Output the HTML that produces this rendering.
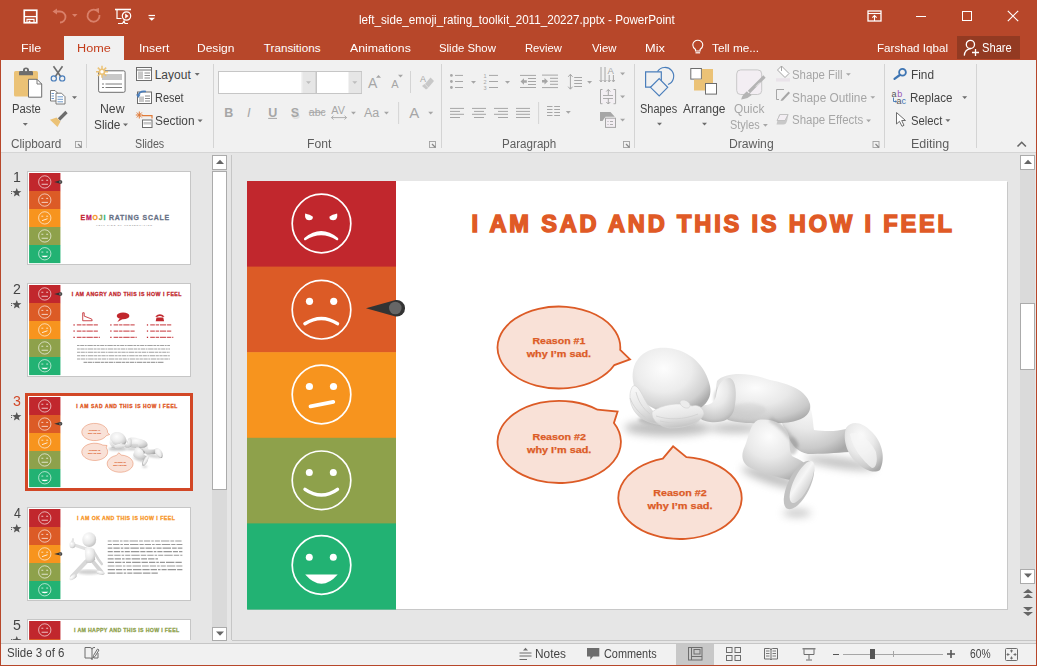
<!DOCTYPE html><html><head><meta charset="utf-8"><style>
html,body{margin:0;padding:0;width:1037px;height:666px;overflow:hidden;background:#E6E6E6}
.a{position:absolute}
.t{position:absolute;font-family:"Liberation Sans",sans-serif;white-space:nowrap;line-height:1}
svg{overflow:visible}
</style></head><body>
<div class="a" style="left:0px;top:0px;width:1037px;height:60px;background:#B7472A;"></div>
<div class="a" style="left:64px;top:36px;width:60px;height:24px;background:#F1F1F1;"></div>
<div class="a" style="left:957px;top:36px;width:63px;height:23px;background:#933A22;"></div>
<svg class="a" style="left:22.5px;top:8.5px;" width="15" height="15" viewBox="0 0 15 15"><rect x="1.25" y="1.25" width="12.5" height="12.5" fill="none" stroke="#fff" stroke-width="1.7"/><path d="M1.3,7.6 H13.7" stroke="#fff" stroke-width="1.3"/><path d="M4,13.8 V10.3 H11 V13.8" fill="none" stroke="#fff" stroke-width="1.2"/><rect x="5.6" y="11.6" width="1.8" height="2.2" fill="#fff"/></svg>
<svg class="a" style="left:51px;top:8px;overflow:visible" width="16" height="15" viewBox="0 0 16 15"><path d="M3.5,6.5 H9 A5.5,5.5 0 0 1 9,17.5" fill="none" stroke="#D9806A" stroke-width="1.8" transform="translate(0,-3)"/><path d="M1.5,3.5 L6,0.5 L6,6.5Z" fill="#D9806A"/></svg>
<svg class="a" style="left:71.5px;top:13.5px;" width="6" height="4" viewBox="0 0 6 4"><path d="M0,0 H5.5 L2.75,3Z" fill="#D9806A"/></svg>
<svg class="a" style="left:86px;top:8px;" width="16" height="15" viewBox="0 0 16 15"><path d="M10.5,2.5 A6,6 0 1 0 13.5,7" fill="none" stroke="#D9806A" stroke-width="1.8"/><path d="M8,1.5 L13,0 L13,5.5Z" fill="#D9806A"/></svg>
<svg class="a" style="left:114px;top:8px;" width="18" height="17" viewBox="0 0 18 17"><path d="M1,1.5 H17" stroke="#fff" stroke-width="1.6"/><path d="M3,2 V10.5 H7.5" fill="none" stroke="#fff" stroke-width="1.2"/><circle cx="12.5" cy="8" r="4.2" fill="none" stroke="#fff" stroke-width="1.2"/><path d="M11.2,5.6 L14.6,8 L11.2,10.4Z" fill="#fff"/><path d="M4,15.5 H8.5 L10,13 L11,15.5 H14" fill="none" stroke="#fff" stroke-width="1.2"/></svg>
<svg class="a" style="left:148px;top:14px;" width="8" height="8" viewBox="0 0 8 8"><path d="M0.5,1.5 H7" stroke="#fff" stroke-width="1.2"/><path d="M0.5,3.8 H7 L3.75,6.8Z" fill="#fff"/></svg>
<svg class="a" style="left:867px;top:10px;" width="15" height="12" viewBox="0 0 15 12"><rect x="1" y="1" width="13" height="10" fill="none" stroke="#fff" stroke-width="1.3"/><path d="M1,3.5 H14" stroke="#fff" stroke-width="1.1"/><path d="M7.5,11 V5.5 M5.3,7.7 L7.5,5.5 L9.7,7.7" fill="none" stroke="#fff" stroke-width="1.1"/></svg>
<div class="a" style="left:916px;top:16px;width:10px;height:1px;background:#fff;"></div>
<div class="a" style="left:962px;top:11px;width:8px;height:8px;border:1.2px solid #fff"></div>
<svg class="a" style="left:1007px;top:10px;" width="12" height="12" viewBox="0 0 12 12"><path d="M0.8,0.8 L11.2,11.2 M11.2,0.8 L0.8,11.2" stroke="#fff" stroke-width="1.2"/></svg>
<svg class="a" style="left:692px;top:40px;" width="12" height="15" viewBox="0 0 12 15"><path d="M3.5,9.5 C1.5,8 0.8,6.4 0.8,4.9 A5,4.6 0 0 1 10.8,4.9 C10.8,6.4 10,8 8.1,9.5 V11 H3.5Z" fill="none" stroke="#fff" stroke-width="1.1"/><path d="M3.5,12.8 H8.1" stroke="#fff" stroke-width="1.2"/></svg>
<svg class="a" style="left:962px;top:39px;" width="18" height="18" viewBox="0 0 18 18"><circle cx="8.4" cy="5.4" r="4.1" fill="none" stroke="#fff" stroke-width="1.3"/><path d="M2.3,16.6 C2.6,12.5 5.2,10 8.6,9.6" fill="none" stroke="#fff" stroke-width="1.3"/><path d="M13.5,10 V17 M10,13.5 H17" stroke="#fff" stroke-width="1.3"/></svg>
<div class="a" style="left:0px;top:60px;width:1037px;height:92px;background:#F1F1F1;"></div>
<div class="a" style="left:0px;top:152px;width:1037px;height:1px;background:#D5D5D5;"></div>
<div class="a" style="left:86px;top:64px;width:1px;height:84px;background:#D4D4D4;"></div>
<div class="a" style="left:213px;top:64px;width:1px;height:84px;background:#D4D4D4;"></div>
<div class="a" style="left:441px;top:64px;width:1px;height:84px;background:#D4D4D4;"></div>
<div class="a" style="left:634px;top:64px;width:1px;height:84px;background:#D4D4D4;"></div>
<div class="a" style="left:884px;top:64px;width:1px;height:84px;background:#D4D4D4;"></div>
<div class="a" style="left:976px;top:64px;width:1px;height:84px;background:#D4D4D4;"></div>
<div class="t" style="left:359.33px;top:13.64px;font-size:12px;color:#fff;font-weight:normal;transform:scaleX(0.9704);transform-origin:0 0;">left_side_emoji_rating_toolkit_2011_20227.pptx - PowerPoint</div>
<div class="t" style="left:21.03px;top:42.20px;font-size:11.7px;color:#fff;font-weight:normal;transform:scaleX(1.0706);transform-origin:0 0;">File</div>
<div class="t" style="left:138.76px;top:42.20px;font-size:11.7px;color:#fff;font-weight:normal;transform:scaleX(1.0357);transform-origin:0 0;">Insert</div>
<div class="t" style="left:196.77px;top:42.20px;font-size:11.7px;color:#fff;font-weight:normal;transform:scaleX(1.0286);transform-origin:0 0;">Design</div>
<div class="t" style="left:263.80px;top:42.20px;font-size:11.7px;color:#fff;font-weight:normal;transform:scaleX(1.0000);transform-origin:0 0;">Transitions</div>
<div class="t" style="left:349.80px;top:42.20px;font-size:11.7px;color:#fff;font-weight:normal;transform:scaleX(1.0517);transform-origin:0 0;">Animations</div>
<div class="t" style="left:439.13px;top:42.20px;font-size:11.7px;color:#fff;font-weight:normal;transform:scaleX(0.9724);transform-origin:0 0;">Slide Show</div>
<div class="t" style="left:525.34px;top:42.20px;font-size:11.7px;color:#fff;font-weight:normal;transform:scaleX(0.9605);transform-origin:0 0;">Review</div>
<div class="t" style="left:592.30px;top:42.20px;font-size:11.7px;color:#fff;font-weight:normal;transform:scaleX(0.9720);transform-origin:0 0;">View</div>
<div class="t" style="left:645.11px;top:42.20px;font-size:11.7px;color:#fff;font-weight:normal;transform:scaleX(1.0941);transform-origin:0 0;">Mix</div>
<div class="t" style="left:712.40px;top:42.20px;font-size:11.7px;color:#fff;font-weight:normal;transform:scaleX(1.0065);transform-origin:0 0;">Tell me...</div>
<div class="t" style="left:76.92px;top:42.20px;font-size:11.7px;color:#C43E1C;font-weight:normal;transform:scaleX(1.0833);transform-origin:0 0;">Home</div>
<div class="t" style="left:876.51px;top:42.20px;font-size:11.7px;color:#fff;font-weight:normal;transform:scaleX(0.9929);transform-origin:0 0;">Farshad Iqbal</div>
<div class="t" style="left:982.27px;top:42.04px;font-size:12px;color:#fff;font-weight:normal;transform:scaleX(0.9290);transform-origin:0 0;">Share</div>
<div class="t" style="left:10.60px;top:137.64px;font-size:12px;color:#5E5E5E;font-weight:normal;transform:scaleX(0.9804);transform-origin:0 0;">Clipboard</div>
<div class="t" style="left:134.91px;top:137.64px;font-size:12px;color:#5E5E5E;font-weight:normal;transform:scaleX(0.8938);transform-origin:0 0;">Slides</div>
<div class="t" style="left:306.59px;top:137.64px;font-size:12px;color:#5E5E5E;font-weight:normal;transform:scaleX(1.0130);transform-origin:0 0;">Font</div>
<div class="t" style="left:502.33px;top:137.64px;font-size:12px;color:#5E5E5E;font-weight:normal;transform:scaleX(0.9685);transform-origin:0 0;">Paragraph</div>
<div class="t" style="left:728.79px;top:137.64px;font-size:12px;color:#5E5E5E;font-weight:normal;transform:scaleX(1.0143);transform-origin:0 0;">Drawing</div>
<div class="t" style="left:911.46px;top:137.64px;font-size:12px;color:#5E5E5E;font-weight:normal;transform:scaleX(1.0429);transform-origin:0 0;">Editing</div>
<div class="t" style="left:11.76px;top:103.14px;font-size:12px;color:#444;font-weight:normal;transform:scaleX(0.9414);transform-origin:0 0;">Paste</div>
<div class="t" style="left:99.58px;top:103.14px;font-size:12px;color:#444;font-weight:normal;transform:scaleX(1.0217);transform-origin:0 0;">New</div>
<div class="t" style="left:94.21px;top:118.84px;font-size:12px;color:#444;font-weight:normal;transform:scaleX(0.9920);transform-origin:0 0;">Slide</div>
<div class="t" style="left:154.70px;top:68.64px;font-size:12px;color:#444;font-weight:normal;transform:scaleX(1.0000);transform-origin:0 0;">Layout</div>
<div class="t" style="left:154.79px;top:91.74px;font-size:12px;color:#444;font-weight:normal;transform:scaleX(0.9133);transform-origin:0 0;">Reset</div>
<div class="t" style="left:154.71px;top:115.24px;font-size:12px;color:#444;font-weight:normal;transform:scaleX(0.9868);transform-origin:0 0;">Section</div>
<div class="t" style="left:640.19px;top:103.04px;font-size:12px;color:#444;font-weight:normal;transform:scaleX(0.9125);transform-origin:0 0;">Shapes</div>
<div class="t" style="left:683.30px;top:103.04px;font-size:12px;color:#444;font-weight:normal;transform:scaleX(0.9952);transform-origin:0 0;">Arrange</div>
<div class="t" style="left:734.30px;top:103.04px;font-size:12px;color:#A6A6A6;font-weight:normal;transform:scaleX(0.9903);transform-origin:0 0;">Quick</div>
<div class="t" style="left:729.59px;top:118.64px;font-size:12px;color:#A6A6A6;font-weight:normal;transform:scaleX(0.9062);transform-origin:0 0;">Styles</div>
<div class="t" style="left:792.05px;top:68.64px;font-size:12px;color:#A6A6A6;font-weight:normal;transform:scaleX(0.9481);transform-origin:0 0;">Shape Fill</div>
<div class="t" style="left:792.01px;top:91.64px;font-size:12px;color:#A6A6A6;font-weight:normal;transform:scaleX(0.9867);transform-origin:0 0;">Shape Outline</div>
<div class="t" style="left:792.04px;top:114.24px;font-size:12px;color:#A6A6A6;font-weight:normal;transform:scaleX(0.9562);transform-origin:0 0;">Shape Effects</div>
<div class="t" style="left:910.61px;top:68.64px;font-size:12px;color:#444;font-weight:normal;transform:scaleX(0.9864);transform-origin:0 0;">Find</div>
<div class="t" style="left:910.44px;top:91.84px;font-size:12px;color:#444;font-weight:normal;transform:scaleX(0.9628);transform-origin:0 0;">Replace</div>
<div class="t" style="left:910.66px;top:114.74px;font-size:12px;color:#444;font-weight:normal;transform:scaleX(0.9406);transform-origin:0 0;">Select</div>
<svg class="a" style="left:0;top:60px" width="1037" height="92" viewBox="0 60 1037 92"><rect x="14" y="71" width="24" height="25.5" rx="1.5" fill="#EBC276"/><path d="M19,75.3 V72.3 Q19,71 20.5,71 H23 V70 A3,2.6 0 0 1 29,70 V71 H31.5 Q33,71 33,72.3 V75.3Z" fill="#6D6D6D"/><circle cx="26" cy="70.2" r="1.1" fill="#F1F1F1"/><path d="M28.5,79.3 H37 L41.7,84 V97.2 H28.5Z" fill="#fff" stroke="#6D6D6D" stroke-width="1"/><path d="M37,79.3 V84 H41.7" fill="none" stroke="#6D6D6D" stroke-width="0.9"/><path d="M22.8,123 h5 l-2.5,2.75z" fill="#6D6D6D"/><path d="M53.5,66.3 L61,77 M62.5,66.3 L55,77" stroke="#6D6D6D" stroke-width="1.6"/><circle cx="53.8" cy="78.4" r="2.6" fill="none" stroke="#4A7EBB" stroke-width="1.2"/><circle cx="62.2" cy="78.4" r="2.6" fill="none" stroke="#4A7EBB" stroke-width="1.2"/><path d="M50.5,90.5 H55 L57.5,93 V101 H50.5Z" fill="#fff" stroke="#6D6D6D" stroke-width="0.9"/><path d="M51.5,93.5 H54 M51.5,96 H54 M51.5,98.5 H54" stroke="#4A7EBB" stroke-width="0.8"/><path d="M56,93.2 H61.5 L65,96.7 V104 H56Z" fill="#fff" stroke="#6D6D6D" stroke-width="0.9"/><path d="M57.5,96.8 H63 M57.5,99.3 H63 M57.5,101.8 H63" stroke="#4A7EBB" stroke-width="0.8"/><path d="M72,96.2 h5 l-2.5,2.75z" fill="#6D6D6D"/><path d="M59,119.5 L64.5,114 M62.5,116 L66.5,112" stroke="#6D6D6D" stroke-width="3.2"/><path d="M50,119.7 L56.5,117.5 L60.5,121.5 L57.5,127 Z" fill="#EBC276"/><rect x="98.6" y="70.8" width="26.5" height="21.5" rx="1.5" fill="#fff" stroke="#6D6D6D" stroke-width="1"/><rect x="102" y="74" width="20" height="6" fill="#C8C8C8"/><path d="M102,84 H104 M105.5,84 H122 M102,87.5 H104 M105.5,87.5 H122" stroke="#6D6D6D" stroke-width="0.9"/><g stroke="#EBC276" stroke-width="1.5"><path d="M102,65.8 V77.8 M96,71.8 H108 M97.8,67.6 L106.2,76 M106.2,67.6 L97.8,76"/></g><circle cx="102" cy="71.8" r="3.2" fill="#EBC276"/><circle cx="102" cy="71.8" r="1.7" fill="#fff"/><path d="M123,123.5 h5 l-2.5,2.75z" fill="#6D6D6D"/><rect x="136.5" y="67.5" width="15" height="13" fill="#fff" stroke="#6D6D6D" stroke-width="1"/><path d="M137,70 H151" stroke="#6D6D6D" stroke-width="1"/><rect x="138" y="71.5" width="5" height="7.5" fill="#C8C8C8"/><path d="M144.5,73 H150 M144.5,75.5 H150 M144.5,78 H150" stroke="#6D6D6D" stroke-width="0.8"/><path d="M194.7,73 h5 l-2.5,2.75z" fill="#6D6D6D"/><rect x="137.5" y="92" width="14" height="11.5" fill="#fff" stroke="#6D6D6D" stroke-width="1"/><rect x="139" y="96.5" width="5" height="5.5" fill="#C8C8C8"/><path d="M145,96 H150 M145,98.5 H150 M145,101 H150" stroke="#6D6D6D" stroke-width="0.8"/><path d="M138,96.5 Q139,90.5 146,91.5" fill="none" stroke="#4A7EBB" stroke-width="1.6"/><path d="M136,94.5 L138.3,98 L140.5,94.5Z" fill="#4A7EBB"/><g stroke="#E07B39" stroke-width="1"><path d="M139.3,111.5 V118.5 M135.8,115 H142.8 M136.8,112.5 L141.8,117.5 M141.8,112.5 L136.8,117.5"/></g><path d="M142,115.7 H152 V118.5" fill="none" stroke="#E07B39" stroke-width="1.2"/><rect x="142.5" y="120" width="9.5" height="7.5" fill="#fff" stroke="#6D6D6D" stroke-width="1"/><rect x="143.5" y="122" width="7.5" height="2.5" fill="#C8C8C8"/><path d="M197.6,119.5 h5 l-2.5,2.75z" fill="#6D6D6D"/><rect x="218.5" y="71.5" width="97" height="22" fill="#fff" stroke="#C6C6C6" stroke-width="1"/><rect x="302.5" y="72" width="13" height="21" fill="#E6E6E6"/><path d="M302,72 V93" stroke="#E6E6E6"/><path d="M306,81.2 h5 l-2.5,2.75z" fill="#BDBDBD"/><rect x="316.5" y="71.5" width="45" height="22" fill="#fff" stroke="#C6C6C6" stroke-width="1"/><rect x="348.5" y="72" width="12.7" height="21" fill="#E6E6E6"/><path d="M352.3,81.2 h5 l-2.5,2.75z" fill="#BDBDBD"/><text x="368" y="88" font-family="Liberation Sans" font-size="14" font-weight="normal" fill="#A6A6A6" text-anchor="start" >A</text><path d="M376,77.7 L378.5,75 L381,77.7Z" fill="#A6A6A6"/><text x="391.2" y="88" font-family="Liberation Sans" font-size="11" font-weight="normal" fill="#A6A6A6" text-anchor="start" >A</text><path d="M398,74.8 H403 L400.5,77.6Z" fill="#A6A6A6"/><path d="M410.5,71 V93" stroke="#D4D4D4"/><text x="420" y="82" font-family="Liberation Sans" font-size="9" font-weight="normal" fill="#A6A6A6" text-anchor="start" >A</text><path d="M425,84 L430.5,77.5 L434,81 L428.5,87.5 Z" fill="#C8C8C8"/><path d="M422,86 L424.5,84 L428.3,88 L426,89.5Z" fill="#C8C8C8"/><text x="224.3" y="117" font-family="Liberation Sans" font-size="12.5" font-weight="bold" fill="#A6A6A6" text-anchor="start" >B</text><text x="247" y="117" font-family="Liberation Sans" font-size="13" font-weight="normal" fill="#A6A6A6" text-anchor="start" font-style="italic" font-family="Liberation Serif">I</text><text x="268.2" y="117" font-family="Liberation Sans" font-size="12.5" font-weight="bold" fill="#A6A6A6" text-anchor="start" >U</text><path d="M268.2,118.4 H277" stroke="#A6A6A6" stroke-width="1"/><text x="291.8" y="118.5" font-family="Liberation Sans" font-size="12.5" font-weight="bold" fill="#A6A6A6" text-anchor="start" fill-opacity="0.25">S</text><text x="290.8" y="117" font-family="Liberation Sans" font-size="12.5" font-weight="bold" fill="#A6A6A6" text-anchor="start" >S</text><text x="308.8" y="116.2" font-family="Liberation Sans" font-size="10.5" font-weight="normal" fill="#A6A6A6" text-anchor="start" >abc</text><path d="M308.8,112.3 H325.2" stroke="#A6A6A6" stroke-width="1"/><text x="331.3" y="114.3" font-family="Liberation Sans" font-size="10.8" font-weight="normal" fill="#A6A6A6" text-anchor="start" >AV</text><path d="M331.5,117.6 H346.5 M333.5,115.6 L331.5,117.6 L333.5,119.6 M344.5,115.6 L346.5,117.6 L344.5,119.6" fill="none" stroke="#A6A6A6" stroke-width="0.9"/><path d="M351,111.8 h4.9 l-2.45,2.6950000000000003z" fill="#A6A6A6"/><text x="364" y="117.1" font-family="Liberation Sans" font-size="12.5" font-weight="normal" fill="#A6A6A6" text-anchor="start" >Aa</text><path d="M384,111.8 h4.9 l-2.45,2.6950000000000003z" fill="#A6A6A6"/><path d="M398.6,102 V124" stroke="#D4D4D4"/><text x="409.3" y="118" font-family="Liberation Sans" font-size="15" font-weight="normal" fill="#A6A6A6" text-anchor="start" >A</text><path d="M428.2,111.8 h5 l-2.5,2.75z" fill="#A6A6A6"/><rect x="429.5" y="141.5" width="6" height="6" fill="none" stroke="#A0A0A0" stroke-width="0.9"/><path d="M432,144 L435.5,147.5" stroke="#888" stroke-width="1.2"/><circle cx="451.4" cy="75.4" r="1.4" fill="#A6A6A6"/><path d="M455,75.4 H463" stroke="#A6A6A6" stroke-width="1"/><circle cx="451.4" cy="81.5" r="1.4" fill="#A6A6A6"/><path d="M455,81.5 H463" stroke="#A6A6A6" stroke-width="1"/><circle cx="451.4" cy="87.5" r="1.4" fill="#A6A6A6"/><path d="M455,87.5 H463" stroke="#A6A6A6" stroke-width="1"/><path d="M471,81 h5 l-2.5,2.75z" fill="#A6A6A6"/><path d="M489,75.4 H498" stroke="#A6A6A6" stroke-width="1"/><text x="483.4" y="78.2" font-family="Liberation Sans" font-size="5.5" fill="#A6A6A6">1</text><path d="M489,81.5 H498" stroke="#A6A6A6" stroke-width="1"/><text x="483.4" y="84.3" font-family="Liberation Sans" font-size="5.5" fill="#A6A6A6">2</text><path d="M489,87.5 H498" stroke="#A6A6A6" stroke-width="1"/><text x="483.4" y="90.3" font-family="Liberation Sans" font-size="5.5" fill="#A6A6A6">3</text><path d="M505,81 h5 l-2.5,2.75z" fill="#A6A6A6"/><path d="M520,75.4 H536 M528,78.5 H536 M528,81.5 H536 M528,84.5 H536 M520,87.5 H536" stroke="#A6A6A6" stroke-width="1"/><path d="M520.5,81.5 L524,78.3 V80.3 H526.8 V82.7 H524 V84.7Z" fill="#A6A6A6"/><path d="M542,75.1 H558 M550,78.3 H558 M550,81.3 H558 M550,84.3 H558 M542,87.6 H558" stroke="#A6A6A6" stroke-width="1"/><path d="M548,81.3 L544.5,78.1 V80.1 H542 V82.5 H544.5 V84.5Z" fill="#A6A6A6"/><path d="M570.4,74.5 V89 M568.2,76.8 L570.4,74.3 L572.6,76.8 M568.2,86.7 L570.4,89.2 L572.6,86.7" fill="none" stroke="#A6A6A6" stroke-width="1"/><path d="M574.2,77.5 H582 M574.2,80.5 H582 M574.2,83.5 H582 M574.2,86.5 H582" stroke="#A6A6A6" stroke-width="1"/><path d="M587.1,81 h5 l-2.5,2.75z" fill="#A6A6A6"/><path d="M601,67 V81.5 M605,67 V81.5 M609.2,75 V81.5 M613.4,75 V81.5" stroke="#A6A6A6" stroke-width="1"/><path d="M599.6,80 L601,82 L602.4,80 M603.6,80 L605,82 L606.4,80 M607.8,80 L609.2,82 L610.6,80 M612,80 L613.4,82 L614.8,80" fill="none" stroke="#A6A6A6" stroke-width="0.9"/><text x="607.5" y="73.5" font-family="Liberation Sans" font-size="9.5" fill="#A6A6A6">A</text><path d="M620.1,72.5 h5 l-2.5,2.75z" fill="#A6A6A6"/><path d="M602.5,89.5 H600.5 V103.7 H602.5 M613.5,89.5 H615.6 V103.7 H613.5" fill="none" stroke="#A6A6A6" stroke-width="1"/><rect x="601" y="90" width="14" height="13.2" fill="#F3EEF3" opacity="0.7"/><path d="M603,95.5 H613 M603,98.5 H613" stroke="#A6A6A6" stroke-width="0.9"/><path d="M608.3,89.5 V95 M606.3,91.5 L608.3,89.5 L610.3,91.5 M608.3,98.5 V104 M606.3,102 L608.3,104 L610.3,102" fill="none" stroke="#A6A6A6" stroke-width="1"/><path d="M620.1,95.6 h5 l-2.5,2.75z" fill="#A6A6A6"/><path d="M600,112 H610.5 L614.8,116.8 H605.5 L602.5,121 H600Z" fill="#A6A6A6"/><rect x="605.5" y="118.2" width="10" height="9.2" fill="#F3EEF3" stroke="#A6A6A6" stroke-width="1"/><path d="M607.5,121.5 H608.5 M610,121.5 H613 M607.5,124.5 H608.5 M610,124.5 H613" stroke="#A6A6A6" stroke-width="0.9"/><path d="M620.1,118.8 h5 l-2.5,2.75z" fill="#A6A6A6"/><path d="M450,108.4 H464" stroke="#A6A6A6" stroke-width="1"/><path d="M450,111.4 H460" stroke="#A6A6A6" stroke-width="1"/><path d="M450,114.3 H464" stroke="#A6A6A6" stroke-width="1"/><path d="M450,117.5 H460" stroke="#A6A6A6" stroke-width="1"/><path d="M472,108.4 H486" stroke="#A6A6A6" stroke-width="1"/><path d="M474,111.4 H484" stroke="#A6A6A6" stroke-width="1"/><path d="M472,114.3 H486" stroke="#A6A6A6" stroke-width="1"/><path d="M474,117.5 H484" stroke="#A6A6A6" stroke-width="1"/><path d="M494,108.4 H508" stroke="#A6A6A6" stroke-width="1"/><path d="M498,111.4 H508" stroke="#A6A6A6" stroke-width="1"/><path d="M494,114.3 H508" stroke="#A6A6A6" stroke-width="1"/><path d="M498,117.5 H508" stroke="#A6A6A6" stroke-width="1"/><path d="M516,108.4 H530" stroke="#A6A6A6" stroke-width="1"/><path d="M516,111.4 H530" stroke="#A6A6A6" stroke-width="1"/><path d="M516,114.3 H530" stroke="#A6A6A6" stroke-width="1"/><path d="M516,117.5 H530" stroke="#A6A6A6" stroke-width="1"/><path d="M538.6,102 V124" stroke="#D4D4D4"/><path d="M547,106.5 H552.5 M554.2,106.5 H560" stroke="#A6A6A6" stroke-width="1"/><path d="M547,109.5 H552.5 M554.2,109.5 H560" stroke="#A6A6A6" stroke-width="1"/><path d="M547,112.5 H552.5 M554.2,112.5 H560" stroke="#A6A6A6" stroke-width="1"/><path d="M547,115.5 H552.5 M554.2,115.5 H560" stroke="#A6A6A6" stroke-width="1"/><path d="M565.8,111 h5 l-2.5,2.75z" fill="#A6A6A6"/><rect x="623.5" y="141.5" width="6" height="6" fill="none" stroke="#A0A0A0" stroke-width="0.9"/><path d="M626,144 L629.5,147.5" stroke="#888" stroke-width="1.2"/><path d="M657.5,71.5 A8.8,8.8 0 1 1 668,84.5" fill="none" stroke="#4A7EBB" stroke-width="1.2"/><path d="M645.6,71.8 H661.3 V87.2 H645.6Z" fill="none" stroke="#4A7EBB" stroke-width="1.2"/><path d="M659.2,78.6 L667.7,87.3 L659.2,96 L650.5,87.3Z" fill="#F1F1F1" stroke="#4A7EBB" stroke-width="1.2"/><path d="M657,122.8 h5 l-2.5,2.75z" fill="#6D6D6D"/><rect x="690.8" y="68.5" width="10.6" height="10.6" fill="#fff" stroke="#6D6D6D" stroke-width="1"/><path d="M694,79.6 H701.9 V68.9 H713 V83 H705.5 V90.4 H694Z" fill="#EBC276"/><rect x="705.5" y="83.5" width="11" height="10.6" fill="#fff" stroke="#6D6D6D" stroke-width="1"/><path d="M702,122.8 h5 l-2.5,2.75z" fill="#6D6D6D"/><rect x="736.7" y="69.9" width="25" height="24.6" rx="4" fill="#F3EEF3" stroke="#C8C8C8" stroke-width="1"/><path d="M764.5,76.5 L749,92 M748,92.5 Q744,96 743.5,97.5 Q747,97 750.5,94" stroke="#B4B4B4" stroke-width="3.2" fill="none"/><path d="M760,82.5 L756,86.5" stroke="#F1F1F1" stroke-width="1"/><path d="M763,124 h4.8 l-2.4,2.64z" fill="#A6A6A6"/><path d="M777.5,70 L781.5,66 L789,73.5 L785,77.5 Z" fill="#fff" stroke="#A6A6A6" stroke-width="1"/><path d="M781.5,66 V71" stroke="#A6A6A6" stroke-width="1"/><rect x="776" y="78.2" width="14" height="3.4" fill="#E9E3E9"/><path d="M846,73.2 h4.8 l-2.4,2.64z" fill="#A6A6A6"/><path d="M784,89.5 H776.5 V99.5 H779" fill="none" stroke="#A6A6A6" stroke-width="1"/><path d="M781.5,99 L788.5,91.5 L790,93 L783,100.5 L780.5,101 Z" fill="#A6A6A6"/><path d="M870.4,96.2 h4.8 l-2.4,2.64z" fill="#A6A6A6"/><path d="M779,114.5 H788.5 L787,121 Q786,124.5 783.5,124.5 H776.5 Z" fill="#C8C8C8"/><path d="M780,114.5 H788 L785,120.5 H777Z" fill="#F3EEF3" stroke="#BDBDBD" stroke-width="0.9"/><path d="M866.2,119.5 h4.8 l-2.4,2.64z" fill="#A6A6A6"/><rect x="873" y="141.5" width="6" height="6" fill="none" stroke="#A0A0A0" stroke-width="0.9"/><path d="M875.5,144 L879,147.5" stroke="#888" stroke-width="1.2"/><circle cx="902.5" cy="72.3" r="3.4" fill="none" stroke="#3E75B3" stroke-width="1.8"/><path d="M899.8,75 L894.5,78.8" stroke="#3E75B3" stroke-width="2.2" stroke-linecap="round"/><text x="891.5" y="96.5" font-family="Liberation Sans" font-size="9" fill="#555">a</text><text x="897.3" y="96.5" font-family="Liberation Sans" font-size="9" fill="#9A57B5">b</text><text x="896.5" y="104" font-family="Liberation Sans" font-size="9" fill="#555">a</text><text x="901.5" y="104" font-family="Liberation Sans" font-size="9" fill="#3E75B3">c</text><path d="M893.5,97.5 V101.5 H896" fill="none" stroke="#3E75B3" stroke-width="0.9"/><path d="M895.5,100 L897,101.5 L895.5,103Z" fill="#3E75B3"/><path d="M962.2,96.3 h5 l-2.5,2.75z" fill="#6D6D6D"/><path d="M896.5,112.5 V124 L899.5,121.3 L902,126.3 L904,125.3 L901.7,120.5 H905.5Z" fill="#fff" stroke="#6D6D6D" stroke-width="1"/><path d="M945.4,119.3 h5 l-2.5,2.75z" fill="#6D6D6D"/><path d="M1017.5,146.5 L1021.7,142.3 L1025.9,146.5" fill="none" stroke="#666" stroke-width="1.6"/><rect x="75.5" y="141.5" width="6" height="6" fill="none" stroke="#A0A0A0" stroke-width="0.9"/><path d="M78,144 L81.5,147.5" stroke="#888" stroke-width="1.2"/></svg>
<div class="a" style="left:0px;top:153px;width:1037px;height:487px;background:#E6E6E6;"></div>
<div class="a" style="left:232px;top:640px;width:805px;height:1px;background:#C6C6C6;"></div>
<div class="a" style="left:0px;top:641px;width:1037px;height:2px;background:#E6E6E6;"></div>
<div class="a" style="left:0px;top:643px;width:1037px;height:1px;background:#C6C6C6;"></div>
<div class="a" style="left:0px;top:644px;width:1037px;height:21px;background:#F1F1F1;"></div>
<div class="a" style="left:0px;top:60px;width:1px;height:606px;background:#B7472A;"></div>
<div class="a" style="left:1036px;top:60px;width:1px;height:606px;background:#B7472A;"></div>
<div class="a" style="left:0px;top:665px;width:1037px;height:1px;background:#B7472A;"></div>
<div class="t" style="left:7.34px;top:647.44px;font-size:12px;color:#444;font-weight:normal;transform:scaleX(0.9576);transform-origin:0 0;">Slide 3 of 6</div>
<svg class="a" style="left:84px;top:646px;" width="17" height="15" viewBox="0 0 17 15"><path d="M1,1.5 H6 Q8,1.5 8,3.5 V13.5 Q8,12 6,12 H1Z M8,3.5 Q8,1.5 10,1.5 H11" fill="none" stroke="#6D6D6D" stroke-width="1"/><path d="M8,13.5 V11.5 M13.5,3 L9.5,9.5 L9,12 L11,10.5 L15,4 Z" fill="none" stroke="#6D6D6D" stroke-width="1"/><path d="M14,7 V12 H10" fill="none" stroke="#6D6D6D" stroke-width="1"/></svg>
<svg class="a" style="left:519px;top:647px;" width="13" height="14" viewBox="0 0 13 14"><path d="M4,3.5 L6.5,0.8 L9,3.5Z" fill="#6D6D6D"/><path d="M0.5,6 H12.5 M0.5,9 H12.5 M0.5,12.5 H8" stroke="#6D6D6D" stroke-width="1.1"/></svg>
<div class="t" style="left:535.31px;top:647.64px;font-size:12px;color:#444;font-weight:normal;transform:scaleX(0.9867);transform-origin:0 0;">Notes</div>
<svg class="a" style="left:587px;top:648px;" width="13" height="12" viewBox="0 0 13 12"><path d="M0,0 H12.3 V8.5 H6 L3.3,11.8 V8.5 H0Z" fill="#6D6D6D"/></svg>
<div class="t" style="left:603.60px;top:647.64px;font-size:12px;color:#444;font-weight:normal;transform:scaleX(0.9069);transform-origin:0 0;">Comments</div>
<div class="a" style="left:676px;top:644px;width:38px;height:21px;background:#C8C8C8;"></div>
<svg class="a" style="left:688px;top:647px;" width="15" height="14" viewBox="0 0 15 14"><rect x="0.5" y="0.5" width="13.5" height="12.5" fill="none" stroke="#6D6D6D" stroke-width="1"/><path d="M3.5,0.5 V13 M3.5,9.5 H14" stroke="#6D6D6D" stroke-width="1"/><rect x="6" y="2.5" width="6" height="4.5" fill="none" stroke="#6D6D6D" stroke-width="1"/></svg>
<svg class="a" style="left:725.5px;top:646.5px;" width="16" height="14" viewBox="0 0 16 14"><rect x="0.5" y="0.5" width="5.5" height="5" fill="none" stroke="#6D6D6D"/><rect x="9" y="0.5" width="5.5" height="5" fill="none" stroke="#6D6D6D"/><rect x="0.5" y="8.5" width="5.5" height="5" fill="none" stroke="#6D6D6D"/><rect x="9" y="8.5" width="5.5" height="5" fill="none" stroke="#6D6D6D"/></svg>
<svg class="a" style="left:763.5px;top:646.5px;" width="15" height="14" viewBox="0 0 15 14"><path d="M0.5,1.5 H5.5 Q7,1.5 7,3 V13 Q7,12 5.5,12 H0.5Z M7,3 Q7,1.5 8.5,1.5 H13.5 V12 H8.5 Q7,12 7,13" fill="none" stroke="#6D6D6D" stroke-width="1"/><path d="M2,4 H5.5 M2,6.5 H5.5 M2,9 H5.5 M8.5,4 H12 M8.5,6.5 H12 M8.5,9 H12" stroke="#6D6D6D" stroke-width="0.9"/></svg>
<svg class="a" style="left:801.5px;top:647.5px;" width="14" height="13" viewBox="0 0 14 13"><path d="M0.5,0.8 H13.5" stroke="#6D6D6D" stroke-width="1.3"/><path d="M2,1.3 V6.5 H12 V1.3" fill="none" stroke="#6D6D6D" stroke-width="1"/><path d="M7,6.5 V11.5 M4,12 H10" stroke="#6D6D6D" stroke-width="1"/></svg>
<div class="a" style="left:833px;top:653.5px;width:6px;height:1.6px;background:#555;"></div>
<div class="a" style="left:843px;top:654px;width:100px;height:1px;background:#A6A6A6;"></div>
<div class="a" style="left:893px;top:651px;width:1px;height:6px;background:#A6A6A6;"></div>
<div class="a" style="left:870px;top:649px;width:4.5px;height:10px;background:#555;"></div>
<svg class="a" style="left:947px;top:650px;" width="8" height="8" viewBox="0 0 8 8"><path d="M4,0 V8 M0,4 H8" stroke="#555" stroke-width="1.6"/></svg>
<div class="t" style="left:970.30px;top:647.84px;font-size:12px;color:#444;font-weight:normal;transform:scaleX(0.8542);transform-origin:0 0;">60%</div>
<svg class="a" style="left:1005px;top:647.5px;" width="13" height="13" viewBox="0 0 13 13"><rect x="0.5" y="0.5" width="12" height="12" rx="1" fill="none" stroke="#6D6D6D" stroke-width="1"/><path d="M6.5,2 V4.5 M6.5,8.5 V11 M2,6.5 H4.5 M8.5,6.5 H11" stroke="#6D6D6D" stroke-width="1"/><path d="M5,3.3 L6.5,2 L8,3.3 M5,9.7 L6.5,11 L8,9.7 M3.3,5 L2,6.5 L3.3,8 M9.7,5 L11,6.5 L9.7,8" fill="none" stroke="#6D6D6D" stroke-width="0.9"/></svg>
<div class="a" style="left:231px;top:155px;width:1px;height:485px;background:#C6C6C6;"></div>
<div class="a" style="left:212px;top:170px;width:15px;height:458px;background:#DADADA;"></div>
<div class="a" style="left:212px;top:155px;width:13px;height:13px;background:#fff;border:1px solid #ABABAB"></div>
<svg class="a" style="left:216px;top:159px;" width="8" height="6" viewBox="0 0 8 6"><path d="M0,5 L4,0.8 L8,5Z" fill="#666"/></svg>
<div class="a" style="left:212px;top:171px;width:13px;height:317px;background:#fff;border:1px solid #ABABAB"></div>
<div class="a" style="left:212px;top:627px;width:13px;height:12px;background:#fff;border:1px solid #ABABAB"></div>
<svg class="a" style="left:216px;top:631px;" width="8" height="6" viewBox="0 0 8 6"><path d="M0,0.5 L4,4.7 L8,0.5Z" fill="#666"/></svg>
<div class="a" style="left:1020px;top:170px;width:15px;height:399px;background:#DADADA;"></div>
<div class="a" style="left:1020px;top:155px;width:13px;height:13px;background:#fff;border:1px solid #ABABAB"></div>
<svg class="a" style="left:1024px;top:159px;" width="8" height="6" viewBox="0 0 8 6"><path d="M0,5 L4,0.8 L8,5Z" fill="#666"/></svg>
<div class="a" style="left:1020px;top:303px;width:13px;height:65px;background:#fff;border:1px solid #ABABAB"></div>
<div class="a" style="left:1020px;top:569px;width:13px;height:13px;background:#fff;border:1px solid #ABABAB"></div>
<svg class="a" style="left:1024px;top:573px;" width="8" height="6" viewBox="0 0 8 6"><path d="M0,0.5 L4,4.7 L8,0.5Z" fill="#666"/></svg>
<svg class="a" style="left:1023px;top:589px;" width="10" height="9" viewBox="0 0 10 9"><path d="M0,4 L5,0 L10,4Z M0,9 L5,5 L10,9Z" fill="#666"/></svg>
<svg class="a" style="left:1023px;top:607px;" width="10" height="9" viewBox="0 0 10 9"><path d="M0,0 L5,4 L10,0Z M0,5 L5,9 L10,5Z" fill="#666"/></svg>
<div class="a" style="left:1007px;top:182px;width:1px;height:428px;background:#C8C8C8;"></div>
<div class="a" style="left:248px;top:609px;width:760px;height:1px;background:#C8C8C8;"></div>
<svg class="a" style="left:247px;top:181px;" width="760" height="428" viewBox="0 0 760 428"><rect width="760" height="428" fill="#fff"/><rect x="0" y="0.0" width="149" height="86.2" fill="#C1272D"/><rect x="0" y="85.6" width="149" height="86.2" fill="#DC5B26"/><rect x="0" y="171.2" width="149" height="86.2" fill="#F7941E"/><rect x="0" y="256.8" width="149" height="86.2" fill="#8EA14B"/><rect x="0" y="342.4" width="149" height="86.2" fill="#22B273"/><g transform="translate(74.5,42.5)"><circle r="29.3" fill="none" stroke="#fff" stroke-width="1.7"/><path d="M-16.3,-10 C-13,-9.2 -10.5,-8.2 -8.6,-6.8 C-8.4,-4.4 -10,-3.3 -12.5,-3.3 C-15.6,-3.3 -17,-6 -16.3,-10Z" fill="#fff"/><path d="M15.6,-10 C12.3,-9.2 9.8,-8.2 7.9,-6.8 C7.7,-4.4 9.3,-3.3 11.8,-3.3 C14.9,-3.3 16.3,-6 15.6,-10Z" fill="#fff"/><path d="M-17.2,14.4 Q-0.3,0.5 16.5,14.4 Q17.5,16.6 15.3,16.8 Q-0.3,6.8 -16,16.8 Q-18.2,16.6 -17.2,14.4Z" fill="#fff"/></g><g transform="translate(74.5,128.7)"><circle r="29.3" fill="none" stroke="#fff" stroke-width="1.7"/><circle cx="-12" cy="-8.4" r="3.6" fill="#fff"/><circle cx="12.2" cy="-8.4" r="3.6" fill="#fff"/><path d="M-16.6,14 Q0,3.4 16,14" fill="none" stroke="#fff" stroke-width="3.4" stroke-linecap="round"/></g><g transform="translate(74.5,213.5)"><circle r="29.3" fill="none" stroke="#fff" stroke-width="1.7"/><circle cx="-12.1" cy="-8" r="3.6" fill="#fff"/><circle cx="12" cy="-8" r="3.6" fill="#fff"/><path d="M-11,11.8 L11.8,7.4" fill="none" stroke="#fff" stroke-width="3.8" stroke-linecap="round"/></g><g transform="translate(74.5,299.3)"><circle r="29.3" fill="none" stroke="#fff" stroke-width="1.7"/><circle cx="-12.2" cy="-7.9" r="3.5" fill="#fff"/><circle cx="11.8" cy="-7.9" r="3.5" fill="#fff"/><path d="M-16.5,9 Q0,20.6 16,9" fill="none" stroke="#fff" stroke-width="3.4" stroke-linecap="round"/></g><g transform="translate(74.5,384)"><circle r="29.3" fill="none" stroke="#fff" stroke-width="1.7"/><circle cx="-12.2" cy="-7.8" r="3.5" fill="#fff"/><circle cx="11.8" cy="-7.8" r="3.5" fill="#fff"/><path d="M-16.3,9.5 L16.2,9.5 Q0,28 -16.3,9.5Z" fill="#fff"/></g><path d="M119,127.2 L148.5,119.0 A8.3,8.3 0 1 1 148.5,135.4 Z" fill="#333"/><circle cx="148.3" cy="127.0" r="6.3" fill="#666"/><text x="224.5" y="50.6" font-family="Liberation Sans" font-weight="bold" font-size="23.6" fill="#E05A26" stroke="#E05A26" stroke-width="1.5" textLength="480.5" lengthAdjust="spacing">I AM SAD AND THIS IS HOW I FEEL</text><defs>
<radialGradient id="gh" cx="0.4" cy="0.32" r="0.72"><stop offset="0" stop-color="#fdfdfd"/><stop offset="0.5" stop-color="#ececec"/><stop offset="0.82" stop-color="#d0d0d0"/><stop offset="1" stop-color="#a9a9a9"/></radialGradient>
<radialGradient id="gb" cx="0.42" cy="0.28" r="0.8"><stop offset="0" stop-color="#fcfcfc"/><stop offset="0.45" stop-color="#e9e9e9"/><stop offset="0.8" stop-color="#cacaca"/><stop offset="1" stop-color="#a8a8a8"/></radialGradient>
<linearGradient id="gl" x1="0" y1="0" x2="0.3" y2="1"><stop offset="0" stop-color="#fafafa"/><stop offset="0.6" stop-color="#e6e6e6"/><stop offset="1" stop-color="#c6c6c6"/></linearGradient>
<linearGradient id="gf" x1="0" y1="0" x2="1" y2="0.4"><stop offset="0" stop-color="#e2e2e2"/><stop offset="0.5" stop-color="#f6f6f6"/><stop offset="1" stop-color="#d8d8d8"/></linearGradient>
<filter id="bl" x="-50%" y="-50%" width="200%" height="200%"><feGaussianBlur stdDeviation="4"/></filter>
<filter id="bl2" x="-50%" y="-50%" width="200%" height="200%"><feGaussianBlur stdDeviation="1.8"/></filter>
</defs>
<g transform="translate(-247,-181)">
<g filter="url(#bl)" fill="#808080" opacity="0.5">
<ellipse cx="668" cy="428" rx="44" ry="8"/>
<ellipse cx="735" cy="428" rx="26" ry="5"/>
<ellipse cx="772" cy="478" rx="32" ry="6" transform="rotate(18 772 478)"/>
<ellipse cx="840" cy="463" rx="36" ry="5" transform="rotate(8 840 463)"/>
<ellipse cx="797" cy="513" rx="14" ry="3.5"/>
</g>
<path d="M779,384 C796,386 806,392 810,406 C813,416 813,424 814,430 C828,432 838,431 846,429 L850,452 C836,453 820,454 808,454 C798,452 792,446 788,436 C780,420 772,400 779,384 Z" fill="url(#gb)"/>
<path d="M846,428 C852,420 862,422 872,432 C882,442 886,458 880,470 C874,474 864,470 856,462 C848,455 842,440 846,428 Z" fill="url(#gb)"/>
<path d="M850,434 C858,430 870,440 876,452 C878,462 876,468 872,468 C864,462 852,448 850,434Z" fill="#f6f6f6" opacity="0.7"/>
<ellipse cx="792" cy="446" rx="6" ry="9" fill="#9a9a9a" opacity="0.45" filter="url(#bl2)"/>
<path d="M717,381 C726,372 748,372 770,380 C790,384 806,390 810,404 C812,416 800,422 782,423 C762,424 742,424 728,420 C718,412 714,394 717,381 Z" fill="url(#gb)"/>
<ellipse cx="748" cy="410" rx="18" ry="7" fill="#c4c4c4" opacity="0.35" filter="url(#bl2)"/>
<path d="M758,420 C772,418 786,424 789,436 C790,444 789,450 792,456 C800,460 806,462 806,468 C804,476 798,481 790,480 C772,476 758,472 749,467 C741,462 741,454 745,446 C749,436 750,424 758,420 Z" fill="url(#gb)"/>
<path d="M770,419 Q786,428 797,447" stroke="#8a8a8a" stroke-width="5" fill="none" opacity="0.35" filter="url(#bl2)"/><ellipse cx="799" cy="485" rx="11" ry="26.5" transform="rotate(26 799 485)" fill="#c2c2c2"/>
<ellipse cx="802" cy="482" rx="8" ry="23" transform="rotate(26 802 482)" fill="url(#gf)"/>
<ellipse cx="720" cy="398" rx="6" ry="10" fill="#8c8c8c" opacity="0.45" filter="url(#bl2)"/>
<path d="M700,405 C708,406 714,404 716,396 C717,386 722,378 730,378 C737,381 737,398 734,410 C731,420 722,423 710,422 C702,421 697,418 698,411 Z" fill="url(#gb)"/>
<path d="M633,381 C630,356 650,346 668,348 C690,350 706,366 710,386 C713,402 700,413 680,413 C655,414 636,402 633,381 Z" fill="url(#gh)"/>
<ellipse cx="668" cy="420" rx="30" ry="5" fill="#777" opacity="0.35" filter="url(#bl2)"/><path d="M633,386 C627,394 630,410 641,418 C650,424 662,426 672,424 C660,420 650,410 645,400 C641,392 637,384 633,386 Z" fill="url(#gl)" stroke="#d4d4d4" stroke-width="0.6"/>
<path d="M636,392 C638,400 642,408 650,414 M630,398 C633,406 638,412 646,418" stroke="#cfcfcf" stroke-width="0.8" fill="none"/>
<path d="M652,412 C662,404 680,402 692,406 C698,404 704,408 704,414 C700,424 685,428 670,428 C660,427 651,420 652,412 Z" fill="url(#gl)" stroke="#d4d4d4" stroke-width="0.6"/>
<path d="M656,416 C668,420 684,420 698,414 M660,421 C672,424 684,424 696,419" stroke="#d0d0d0" stroke-width="0.8" fill="none"/>
<ellipse cx="685" cy="404" rx="5.5" ry="3.5" transform="rotate(30 685 404)" fill="#ececec" stroke="#d2d2d2" stroke-width="0.6"/>
</g><path d="M373.2,168.87 L383,178.3 L367.36,184.09 A61.4,41.0 0 1 1 373.2,168.87 Z" fill="#F9E1D7" stroke="#DC5B26" stroke-width="1.8" stroke-linejoin="miter"/><text x="311.9" y="162.8" text-anchor="middle" font-family="Liberation Sans" font-weight="bold" font-size="9.6" fill="#DC5B26" textLength="52.8" lengthAdjust="spacingAndGlyphs" stroke="#DC5B26" stroke-width="0.25">Reason #1</text><text x="311.9" y="175.7" text-anchor="middle" font-family="Liberation Sans" font-weight="bold" font-size="9.6" fill="#DC5B26" textLength="64.4" lengthAdjust="spacingAndGlyphs" stroke="#DC5B26" stroke-width="0.25">why I’m sad.</text><path d="M350.55,228.71 L370.6,230.6 L366.94,241.94 A61.7,41.1 0 1 1 350.55,228.71 Z" fill="#F9E1D7" stroke="#DC5B26" stroke-width="1.8" stroke-linejoin="miter"/><text x="312.2" y="258.8" text-anchor="middle" font-family="Liberation Sans" font-weight="bold" font-size="9.6" fill="#DC5B26" textLength="53.6" lengthAdjust="spacingAndGlyphs" stroke="#DC5B26" stroke-width="0.25">Reason #2</text><text x="312.2" y="271.9" text-anchor="middle" font-family="Liberation Sans" font-weight="bold" font-size="9.6" fill="#DC5B26" textLength="64.4" lengthAdjust="spacingAndGlyphs" stroke="#DC5B26" stroke-width="0.25">why I’m sad.</text><path d="M415.81,277.62 L426.1,265.3 L439.4,276.22 A61.7,41 0 1 1 415.81,277.62 Z" fill="#F9E1D7" stroke="#DC5B26" stroke-width="1.8" stroke-linejoin="miter"/><text x="433" y="315" text-anchor="middle" font-family="Liberation Sans" font-weight="bold" font-size="9.6" fill="#DC5B26" textLength="53.6" lengthAdjust="spacingAndGlyphs" stroke="#DC5B26" stroke-width="0.25">Reason #2</text><text x="433" y="327.9" text-anchor="middle" font-family="Liberation Sans" font-weight="bold" font-size="9.6" fill="#DC5B26" textLength="65" lengthAdjust="spacingAndGlyphs" stroke="#DC5B26" stroke-width="0.25">why I’m sad.</text></svg>
<div class="a" style="left:0;top:153px;width:211px;height:487px;overflow:hidden"><div class="a" style="left:0;top:-153px;width:211px;height:640px">
<div class="a" style="left:27px;top:171px;width:164px;height:94px;background:#C6C6C6;"></div>
<div class="a" style="left:28px;top:172px;width:162px;height:92px;background:#fff;"></div>
<svg class="a" style="left:29px;top:173px;" width="160" height="90" viewBox="0 0 760 428"><rect width="760" height="428" fill="#fff"/><rect x="0" y="0.0" width="149" height="86.2" fill="#C1272D"/><rect x="0" y="85.6" width="149" height="86.2" fill="#DC5B26"/><rect x="0" y="171.2" width="149" height="86.2" fill="#F7941E"/><rect x="0" y="256.8" width="149" height="86.2" fill="#8EA14B"/><rect x="0" y="342.4" width="149" height="86.2" fill="#22B273"/><g transform="translate(74.5,42.5)" stroke="#fff" stroke-opacity="0.85" fill="none" stroke-width="3.5"><circle r="29.3"/><path d="M-16,-8 H-7 M7,-8 H16" stroke-width="4"/><path d="M-15,11 H15" stroke-width="4"/></g><g transform="translate(74.5,128.7)" stroke="#fff" stroke-opacity="0.85" fill="none" stroke-width="3.5"><circle r="29.3"/><path d="M-16,-8 H-7 M7,-8 H16" stroke-width="4"/><path d="M-15,11 H15" stroke-width="4"/></g><g transform="translate(74.5,213.5)" stroke="#fff" stroke-opacity="0.85" fill="none" stroke-width="3.5"><circle r="29.3"/><path d="M-16,-8 H-7 M7,-8 H16" stroke-width="4"/><path d="M-13,13 L13,4" stroke-width="4.5"/></g><g transform="translate(74.5,299.3)" stroke="#fff" stroke-opacity="0.85" fill="none" stroke-width="3.5"><circle r="29.3"/><path d="M-16,-8 H-7 M7,-8 H16" stroke-width="4"/><path d="M-15,11 H15" stroke-width="4"/></g><g transform="translate(74.5,384)" stroke="#fff" stroke-opacity="0.85" fill="none" stroke-width="3.5"><circle r="29.3"/><path d="M-16,-8 H-7 M7,-8 H16" stroke-width="4"/><path d="M-17,9 H17 Q0,24 -17,9Z" fill="#fff" stroke="none"/></g><path d="M119,42.5 L148.5,34.3 A8.3,8.3 0 1 1 148.5,50.7 Z" fill="#333"/><circle cx="148.3" cy="42.3" r="6.3" fill="#666"/><text x="245" y="224" font-family="Liberation Sans" font-weight="bold" font-size="33" textLength="421" lengthAdjust="spacing" stroke-width="1.2"><tspan fill="#C1272D" stroke="#C1272D">E</tspan><tspan fill="#C2185B" stroke="#C2185B">M</tspan><tspan fill="#F7941E" stroke="#F7941E">O</tspan><tspan fill="#8EA14B" stroke="#8EA14B">J</tspan><tspan fill="#22B273" stroke="#22B273">I</tspan><tspan fill="#667085" stroke="#667085"> RATING SCALE</tspan></text><text x="320" y="252" font-family="Liberation Sans" font-size="12" fill="#888" textLength="268" lengthAdjust="spacingAndGlyphs" letter-spacing="4">LEFT SIDE OF PRESENTATION</text></svg>
<div class="a" style="left:27px;top:283px;width:164px;height:94px;background:#C6C6C6;"></div>
<div class="a" style="left:28px;top:284px;width:162px;height:92px;background:#fff;"></div>
<svg class="a" style="left:29px;top:285px;" width="160" height="90" viewBox="0 0 760 428"><rect width="760" height="428" fill="#fff"/><rect x="0" y="0.0" width="149" height="86.2" fill="#C1272D"/><rect x="0" y="85.6" width="149" height="86.2" fill="#DC5B26"/><rect x="0" y="171.2" width="149" height="86.2" fill="#F7941E"/><rect x="0" y="256.8" width="149" height="86.2" fill="#8EA14B"/><rect x="0" y="342.4" width="149" height="86.2" fill="#22B273"/><g transform="translate(74.5,42.5)" stroke="#fff" stroke-opacity="0.85" fill="none" stroke-width="3.5"><circle r="29.3"/><path d="M-16,-8 H-7 M7,-8 H16" stroke-width="4"/><path d="M-15,11 H15" stroke-width="4"/></g><g transform="translate(74.5,128.7)" stroke="#fff" stroke-opacity="0.85" fill="none" stroke-width="3.5"><circle r="29.3"/><path d="M-16,-8 H-7 M7,-8 H16" stroke-width="4"/><path d="M-15,11 H15" stroke-width="4"/></g><g transform="translate(74.5,213.5)" stroke="#fff" stroke-opacity="0.85" fill="none" stroke-width="3.5"><circle r="29.3"/><path d="M-16,-8 H-7 M7,-8 H16" stroke-width="4"/><path d="M-13,13 L13,4" stroke-width="4.5"/></g><g transform="translate(74.5,299.3)" stroke="#fff" stroke-opacity="0.85" fill="none" stroke-width="3.5"><circle r="29.3"/><path d="M-16,-8 H-7 M7,-8 H16" stroke-width="4"/><path d="M-15,11 H15" stroke-width="4"/></g><g transform="translate(74.5,384)" stroke="#fff" stroke-opacity="0.85" fill="none" stroke-width="3.5"><circle r="29.3"/><path d="M-16,-8 H-7 M7,-8 H16" stroke-width="4"/><path d="M-17,9 H17 Q0,24 -17,9Z" fill="#fff" stroke="none"/></g><path d="M119,42.5 L148.5,34.3 A8.3,8.3 0 1 1 148.5,50.7 Z" fill="#333"/><circle cx="148.3" cy="42.3" r="6.3" fill="#666"/><text x="203" y="54" font-family="Liberation Sans" font-weight="bold" font-size="25" fill="#C1272D" stroke="#C1272D" stroke-width="1.2" textLength="522" lengthAdjust="spacing">I AM ANGRY AND THIS IS HOW I FEEL</text><path d="M255,132 V170 H300 L298,162 L262,148 V132Z" fill="none" stroke="#C1272D" stroke-width="4"/><ellipse cx="447" cy="147" rx="30" ry="16" fill="#C1272D"/><path d="M430,160 L420,176 L445,162Z" fill="#C1272D"/><path d="M600,150 Q622,128 644,150 L636,152 Q622,142 608,152Z M606,155 H638 L642,172 H602Z" fill="#C1272D"/><rect x="211" y="187" width="6" height="6" fill="#C1272D"/><path d="M227,190 h100" stroke="#C1272D" stroke-width="6" stroke-dasharray="22 4 16 4 30 4 20 4" opacity="0.75"/><rect x="211" y="216" width="6" height="6" fill="#C1272D"/><path d="M227,219 h100" stroke="#C1272D" stroke-width="6" stroke-dasharray="22 4 16 4 30 4 20 4" opacity="0.75"/><rect x="211" y="246" width="6" height="6" fill="#C1272D"/><path d="M227,249 h110" stroke="#C1272D" stroke-width="6" stroke-dasharray="22 4 16 4 30 4 20 4" opacity="0.75"/><rect x="386" y="187" width="6" height="6" fill="#C1272D"/><path d="M402,190 h100" stroke="#C1272D" stroke-width="6" stroke-dasharray="22 4 16 4 30 4 20 4" opacity="0.75"/><rect x="386" y="216" width="6" height="6" fill="#C1272D"/><path d="M402,219 h100" stroke="#C1272D" stroke-width="6" stroke-dasharray="22 4 16 4 30 4 20 4" opacity="0.75"/><rect x="386" y="246" width="6" height="6" fill="#C1272D"/><path d="M402,249 h110" stroke="#C1272D" stroke-width="6" stroke-dasharray="22 4 16 4 30 4 20 4" opacity="0.75"/><rect x="560" y="187" width="6" height="6" fill="#C1272D"/><path d="M576,190 h100" stroke="#C1272D" stroke-width="6" stroke-dasharray="22 4 16 4 30 4 20 4" opacity="0.75"/><rect x="560" y="216" width="6" height="6" fill="#C1272D"/><path d="M576,219 h100" stroke="#C1272D" stroke-width="6" stroke-dasharray="22 4 16 4 30 4 20 4" opacity="0.75"/><rect x="560" y="246" width="6" height="6" fill="#C1272D"/><path d="M576,249 h110" stroke="#C1272D" stroke-width="6" stroke-dasharray="22 4 16 4 30 4 20 4" opacity="0.75"/><path d="M228,288 h442" stroke="#555" stroke-width="5" stroke-dasharray="12 3 20 3 8 3 26 3 14 3" opacity="0.55"/><path d="M228,304 h442" stroke="#555" stroke-width="5" stroke-dasharray="13 3 20 3 8 3 26 3 14 3" opacity="0.55"/><path d="M228,320 h442" stroke="#555" stroke-width="5" stroke-dasharray="14 3 20 3 8 3 26 3 14 3" opacity="0.55"/><path d="M228,336 h442" stroke="#555" stroke-width="5" stroke-dasharray="15 3 20 3 8 3 26 3 14 3" opacity="0.55"/><path d="M228,352 h442" stroke="#555" stroke-width="5" stroke-dasharray="16 3 20 3 8 3 26 3 14 3" opacity="0.55"/><path d="M259,368 h380" stroke="#555" stroke-width="5" stroke-dasharray="17 3 20 3 8 3 26 3 14 3" opacity="0.55"/></svg>
<div class="a" style="left:25px;top:393px;width:168px;height:98px;background:#D24726;"></div>
<div class="a" style="left:28px;top:396px;width:162px;height:92px;background:#fff;"></div>
<svg class="a" style="left:29px;top:397px;" width="160" height="90" viewBox="0 0 760 428"><rect width="760" height="428" fill="#fff"/><rect x="0" y="0.0" width="149" height="86.2" fill="#C1272D"/><rect x="0" y="85.6" width="149" height="86.2" fill="#DC5B26"/><rect x="0" y="171.2" width="149" height="86.2" fill="#F7941E"/><rect x="0" y="256.8" width="149" height="86.2" fill="#8EA14B"/><rect x="0" y="342.4" width="149" height="86.2" fill="#22B273"/><g transform="translate(74.5,42.5)" stroke="#fff" stroke-opacity="0.85" fill="none" stroke-width="3.5"><circle r="29.3"/><path d="M-16,-8 H-7 M7,-8 H16" stroke-width="4"/><path d="M-15,11 H15" stroke-width="4"/></g><g transform="translate(74.5,128.7)" stroke="#fff" stroke-opacity="0.85" fill="none" stroke-width="3.5"><circle r="29.3"/><path d="M-16,-8 H-7 M7,-8 H16" stroke-width="4"/><path d="M-15,11 H15" stroke-width="4"/></g><g transform="translate(74.5,213.5)" stroke="#fff" stroke-opacity="0.85" fill="none" stroke-width="3.5"><circle r="29.3"/><path d="M-16,-8 H-7 M7,-8 H16" stroke-width="4"/><path d="M-13,13 L13,4" stroke-width="4.5"/></g><g transform="translate(74.5,299.3)" stroke="#fff" stroke-opacity="0.85" fill="none" stroke-width="3.5"><circle r="29.3"/><path d="M-16,-8 H-7 M7,-8 H16" stroke-width="4"/><path d="M-15,11 H15" stroke-width="4"/></g><g transform="translate(74.5,384)" stroke="#fff" stroke-opacity="0.85" fill="none" stroke-width="3.5"><circle r="29.3"/><path d="M-16,-8 H-7 M7,-8 H16" stroke-width="4"/><path d="M-17,9 H17 Q0,24 -17,9Z" fill="#fff" stroke="none"/></g><path d="M119,127.2 L148.5,119.0 A8.3,8.3 0 1 1 148.5,135.4 Z" fill="#333"/><circle cx="148.3" cy="127.0" r="6.3" fill="#666"/><text x="224.5" y="50.6" font-family="Liberation Sans" font-weight="bold" font-size="23.6" fill="#E05A26" stroke="#E05A26" stroke-width="1.5" textLength="480.5" lengthAdjust="spacing">I AM SAD AND THIS IS HOW I FEEL</text><defs>
<radialGradient id="gh" cx="0.4" cy="0.32" r="0.72"><stop offset="0" stop-color="#fdfdfd"/><stop offset="0.5" stop-color="#ececec"/><stop offset="0.82" stop-color="#d0d0d0"/><stop offset="1" stop-color="#a9a9a9"/></radialGradient>
<radialGradient id="gb" cx="0.42" cy="0.28" r="0.8"><stop offset="0" stop-color="#fcfcfc"/><stop offset="0.45" stop-color="#e9e9e9"/><stop offset="0.8" stop-color="#cacaca"/><stop offset="1" stop-color="#a8a8a8"/></radialGradient>
<linearGradient id="gl" x1="0" y1="0" x2="0.3" y2="1"><stop offset="0" stop-color="#fafafa"/><stop offset="0.6" stop-color="#e6e6e6"/><stop offset="1" stop-color="#c6c6c6"/></linearGradient>
<linearGradient id="gf" x1="0" y1="0" x2="1" y2="0.4"><stop offset="0" stop-color="#e2e2e2"/><stop offset="0.5" stop-color="#f6f6f6"/><stop offset="1" stop-color="#d8d8d8"/></linearGradient>
<filter id="bl" x="-50%" y="-50%" width="200%" height="200%"><feGaussianBlur stdDeviation="4"/></filter>
<filter id="bl2" x="-50%" y="-50%" width="200%" height="200%"><feGaussianBlur stdDeviation="1.8"/></filter>
</defs>
<g transform="translate(-247,-181)">
<g filter="url(#bl)" fill="#808080" opacity="0.5">
<ellipse cx="668" cy="428" rx="44" ry="8"/>
<ellipse cx="735" cy="428" rx="26" ry="5"/>
<ellipse cx="772" cy="478" rx="32" ry="6" transform="rotate(18 772 478)"/>
<ellipse cx="840" cy="463" rx="36" ry="5" transform="rotate(8 840 463)"/>
<ellipse cx="797" cy="513" rx="14" ry="3.5"/>
</g>
<path d="M779,384 C796,386 806,392 810,406 C813,416 813,424 814,430 C828,432 838,431 846,429 L850,452 C836,453 820,454 808,454 C798,452 792,446 788,436 C780,420 772,400 779,384 Z" fill="url(#gb)"/>
<path d="M846,428 C852,420 862,422 872,432 C882,442 886,458 880,470 C874,474 864,470 856,462 C848,455 842,440 846,428 Z" fill="url(#gb)"/>
<path d="M850,434 C858,430 870,440 876,452 C878,462 876,468 872,468 C864,462 852,448 850,434Z" fill="#f6f6f6" opacity="0.7"/>
<ellipse cx="792" cy="446" rx="6" ry="9" fill="#9a9a9a" opacity="0.45" filter="url(#bl2)"/>
<path d="M717,381 C726,372 748,372 770,380 C790,384 806,390 810,404 C812,416 800,422 782,423 C762,424 742,424 728,420 C718,412 714,394 717,381 Z" fill="url(#gb)"/>
<ellipse cx="748" cy="410" rx="18" ry="7" fill="#c4c4c4" opacity="0.35" filter="url(#bl2)"/>
<path d="M758,420 C772,418 786,424 789,436 C790,444 789,450 792,456 C800,460 806,462 806,468 C804,476 798,481 790,480 C772,476 758,472 749,467 C741,462 741,454 745,446 C749,436 750,424 758,420 Z" fill="url(#gb)"/>
<path d="M770,419 Q786,428 797,447" stroke="#8a8a8a" stroke-width="5" fill="none" opacity="0.35" filter="url(#bl2)"/><ellipse cx="799" cy="485" rx="11" ry="26.5" transform="rotate(26 799 485)" fill="#c2c2c2"/>
<ellipse cx="802" cy="482" rx="8" ry="23" transform="rotate(26 802 482)" fill="url(#gf)"/>
<ellipse cx="720" cy="398" rx="6" ry="10" fill="#8c8c8c" opacity="0.45" filter="url(#bl2)"/>
<path d="M700,405 C708,406 714,404 716,396 C717,386 722,378 730,378 C737,381 737,398 734,410 C731,420 722,423 710,422 C702,421 697,418 698,411 Z" fill="url(#gb)"/>
<path d="M633,381 C630,356 650,346 668,348 C690,350 706,366 710,386 C713,402 700,413 680,413 C655,414 636,402 633,381 Z" fill="url(#gh)"/>
<ellipse cx="668" cy="420" rx="30" ry="5" fill="#777" opacity="0.35" filter="url(#bl2)"/><path d="M633,386 C627,394 630,410 641,418 C650,424 662,426 672,424 C660,420 650,410 645,400 C641,392 637,384 633,386 Z" fill="url(#gl)" stroke="#d4d4d4" stroke-width="0.6"/>
<path d="M636,392 C638,400 642,408 650,414 M630,398 C633,406 638,412 646,418" stroke="#cfcfcf" stroke-width="0.8" fill="none"/>
<path d="M652,412 C662,404 680,402 692,406 C698,404 704,408 704,414 C700,424 685,428 670,428 C660,427 651,420 652,412 Z" fill="url(#gl)" stroke="#d4d4d4" stroke-width="0.6"/>
<path d="M656,416 C668,420 684,420 698,414 M660,421 C672,424 684,424 696,419" stroke="#d0d0d0" stroke-width="0.8" fill="none"/>
<ellipse cx="685" cy="404" rx="5.5" ry="3.5" transform="rotate(30 685 404)" fill="#ececec" stroke="#d2d2d2" stroke-width="0.6"/>
</g><path d="M373.2,168.87 L383,178.3 L367.36,184.09 A61.4,41.0 0 1 1 373.2,168.87 Z" fill="#F9E1D7" stroke="#DC5B26" stroke-width="1.8" stroke-linejoin="miter"/><text x="311.9" y="162.8" text-anchor="middle" font-family="Liberation Sans" font-weight="bold" font-size="9.6" fill="#DC5B26" textLength="52.8" lengthAdjust="spacingAndGlyphs" stroke="#DC5B26" stroke-width="0.25">Reason #1</text><text x="311.9" y="175.7" text-anchor="middle" font-family="Liberation Sans" font-weight="bold" font-size="9.6" fill="#DC5B26" textLength="64.4" lengthAdjust="spacingAndGlyphs" stroke="#DC5B26" stroke-width="0.25">why I’m sad.</text><path d="M350.55,228.71 L370.6,230.6 L366.94,241.94 A61.7,41.1 0 1 1 350.55,228.71 Z" fill="#F9E1D7" stroke="#DC5B26" stroke-width="1.8" stroke-linejoin="miter"/><text x="312.2" y="258.8" text-anchor="middle" font-family="Liberation Sans" font-weight="bold" font-size="9.6" fill="#DC5B26" textLength="53.6" lengthAdjust="spacingAndGlyphs" stroke="#DC5B26" stroke-width="0.25">Reason #2</text><text x="312.2" y="271.9" text-anchor="middle" font-family="Liberation Sans" font-weight="bold" font-size="9.6" fill="#DC5B26" textLength="64.4" lengthAdjust="spacingAndGlyphs" stroke="#DC5B26" stroke-width="0.25">why I’m sad.</text><path d="M415.81,277.62 L426.1,265.3 L439.4,276.22 A61.7,41 0 1 1 415.81,277.62 Z" fill="#F9E1D7" stroke="#DC5B26" stroke-width="1.8" stroke-linejoin="miter"/><text x="433" y="315" text-anchor="middle" font-family="Liberation Sans" font-weight="bold" font-size="9.6" fill="#DC5B26" textLength="53.6" lengthAdjust="spacingAndGlyphs" stroke="#DC5B26" stroke-width="0.25">Reason #2</text><text x="433" y="327.9" text-anchor="middle" font-family="Liberation Sans" font-weight="bold" font-size="9.6" fill="#DC5B26" textLength="65" lengthAdjust="spacingAndGlyphs" stroke="#DC5B26" stroke-width="0.25">why I’m sad.</text></svg>
<div class="a" style="left:27px;top:507px;width:164px;height:94px;background:#C6C6C6;"></div>
<div class="a" style="left:28px;top:508px;width:162px;height:92px;background:#fff;"></div>
<svg class="a" style="left:29px;top:509px;" width="160" height="90" viewBox="0 0 760 428"><rect width="760" height="428" fill="#fff"/><rect x="0" y="0.0" width="149" height="86.2" fill="#C1272D"/><rect x="0" y="85.6" width="149" height="86.2" fill="#DC5B26"/><rect x="0" y="171.2" width="149" height="86.2" fill="#F7941E"/><rect x="0" y="256.8" width="149" height="86.2" fill="#8EA14B"/><rect x="0" y="342.4" width="149" height="86.2" fill="#22B273"/><g transform="translate(74.5,42.5)" stroke="#fff" stroke-opacity="0.85" fill="none" stroke-width="3.5"><circle r="29.3"/><path d="M-16,-8 H-7 M7,-8 H16" stroke-width="4"/><path d="M-15,11 H15" stroke-width="4"/></g><g transform="translate(74.5,128.7)" stroke="#fff" stroke-opacity="0.85" fill="none" stroke-width="3.5"><circle r="29.3"/><path d="M-16,-8 H-7 M7,-8 H16" stroke-width="4"/><path d="M-15,11 H15" stroke-width="4"/></g><g transform="translate(74.5,213.5)" stroke="#fff" stroke-opacity="0.85" fill="none" stroke-width="3.5"><circle r="29.3"/><path d="M-16,-8 H-7 M7,-8 H16" stroke-width="4"/><path d="M-13,13 L13,4" stroke-width="4.5"/></g><g transform="translate(74.5,299.3)" stroke="#fff" stroke-opacity="0.85" fill="none" stroke-width="3.5"><circle r="29.3"/><path d="M-16,-8 H-7 M7,-8 H16" stroke-width="4"/><path d="M-15,11 H15" stroke-width="4"/></g><g transform="translate(74.5,384)" stroke="#fff" stroke-opacity="0.85" fill="none" stroke-width="3.5"><circle r="29.3"/><path d="M-16,-8 H-7 M7,-8 H16" stroke-width="4"/><path d="M-17,9 H17 Q0,24 -17,9Z" fill="#fff" stroke="none"/></g><path d="M119,213.5 L148.5,205.3 A8.3,8.3 0 1 1 148.5,221.7 Z" fill="#333"/><circle cx="148.3" cy="213.3" r="6.3" fill="#666"/><text x="228" y="52.5" font-family="Liberation Sans" font-weight="bold" font-size="25" fill="#F7941E" stroke="#F7941E" stroke-width="1.2" textLength="466" lengthAdjust="spacing">I AM OK AND THIS IS HOW I FEEL</text><defs><radialGradient id="g4" cx="0.35" cy="0.3" r="0.8"><stop offset="0" stop-color="#fff"/><stop offset="0.6" stop-color="#e6e6e6"/><stop offset="1" stop-color="#b8b8b8"/></radialGradient>
<filter id="b4"><feGaussianBlur stdDeviation="6"/></filter></defs>
<ellipse cx="285" cy="300" rx="55" ry="12" fill="#999" opacity="0.45" filter="url(#b4)"/>
<g stroke-linecap="round" fill="none">
<path d="M272,250 L232,292 L204,322" stroke="#d8d8d8" stroke-width="20"/>
<path d="M304,250 L330,282 L345,300" stroke="#d4d4d4" stroke-width="18"/>
<path d="M272,190 L222,174" stroke="#e0e0e0" stroke-width="15"/>
<path d="M306,200 L330,240 L346,262" stroke="#d6d6d6" stroke-width="12"/>
</g>
<ellipse cx="206" cy="170" rx="14" ry="17" fill="url(#g4)"/>
<path d="M200,158 L206,138 L214,140 L212,160Z" fill="#e4e4e4"/>
<ellipse cx="209" cy="324" rx="20" ry="10" transform="rotate(-35 209 324)" fill="url(#g4)"/>
<ellipse cx="340" cy="303" rx="20" ry="9" transform="rotate(15 340 303)" fill="url(#g4)"/>
<path d="M266,185 Q290,176 310,192 L314,240 Q300,262 272,256 Q262,220 266,185Z" fill="url(#g4)"/>
<ellipse cx="286" cy="146" rx="33" ry="35" fill="url(#g4)"/><path d="M374,152 h355" stroke="#444" stroke-width="5.5" stroke-dasharray="18 5 30 5 12 5 24 5 40 5" opacity="0.55"/><path d="M374,169 h355" stroke="#444" stroke-width="5.5" stroke-dasharray="20 5 30 5 12 5 24 5 40 5" opacity="0.55"/><path d="M374,186 h355" stroke="#444" stroke-width="5.5" stroke-dasharray="22 5 30 5 12 5 24 5 40 5" opacity="0.55"/><path d="M374,203 h355" stroke="#444" stroke-width="5.5" stroke-dasharray="24 5 30 5 12 5 24 5 40 5" opacity="0.55"/><path d="M374,220 h355" stroke="#444" stroke-width="5.5" stroke-dasharray="26 5 30 5 12 5 24 5 40 5" opacity="0.55"/><path d="M374,237 h240" stroke="#444" stroke-width="5.5" stroke-dasharray="28 5 30 5 12 5 24 5 40 5" opacity="0.55"/><path d="M374,254 h355" stroke="#444" stroke-width="5.5" stroke-dasharray="30 5 30 5 12 5 24 5 40 5" opacity="0.55"/><path d="M374,271 h355" stroke="#444" stroke-width="5.5" stroke-dasharray="32 5 30 5 12 5 24 5 40 5" opacity="0.55"/><path d="M374,288 h355" stroke="#444" stroke-width="5.5" stroke-dasharray="34 5 30 5 12 5 24 5 40 5" opacity="0.55"/><path d="M374,305 h240" stroke="#444" stroke-width="5.5" stroke-dasharray="36 5 30 5 12 5 24 5 40 5" opacity="0.55"/></svg>
<div class="a" style="left:27px;top:619px;width:164px;height:94px;background:#C6C6C6;"></div>
<div class="a" style="left:28px;top:620px;width:162px;height:92px;background:#fff;"></div>
<svg class="a" style="left:29px;top:621px;" width="160" height="90" viewBox="0 0 760 428"><rect width="760" height="428" fill="#fff"/><rect x="0" y="0.0" width="149" height="86.2" fill="#C1272D"/><rect x="0" y="85.6" width="149" height="86.2" fill="#DC5B26"/><rect x="0" y="171.2" width="149" height="86.2" fill="#F7941E"/><rect x="0" y="256.8" width="149" height="86.2" fill="#8EA14B"/><rect x="0" y="342.4" width="149" height="86.2" fill="#22B273"/><g transform="translate(74.5,42.5)" stroke="#fff" stroke-opacity="0.85" fill="none" stroke-width="3.5"><circle r="29.3"/><path d="M-16,-8 H-7 M7,-8 H16" stroke-width="4"/><path d="M-15,11 H15" stroke-width="4"/></g><g transform="translate(74.5,128.7)" stroke="#fff" stroke-opacity="0.85" fill="none" stroke-width="3.5"><circle r="29.3"/><path d="M-16,-8 H-7 M7,-8 H16" stroke-width="4"/><path d="M-15,11 H15" stroke-width="4"/></g><g transform="translate(74.5,213.5)" stroke="#fff" stroke-opacity="0.85" fill="none" stroke-width="3.5"><circle r="29.3"/><path d="M-16,-8 H-7 M7,-8 H16" stroke-width="4"/><path d="M-13,13 L13,4" stroke-width="4.5"/></g><g transform="translate(74.5,299.3)" stroke="#fff" stroke-opacity="0.85" fill="none" stroke-width="3.5"><circle r="29.3"/><path d="M-16,-8 H-7 M7,-8 H16" stroke-width="4"/><path d="M-15,11 H15" stroke-width="4"/></g><g transform="translate(74.5,384)" stroke="#fff" stroke-opacity="0.85" fill="none" stroke-width="3.5"><circle r="29.3"/><path d="M-16,-8 H-7 M7,-8 H16" stroke-width="4"/><path d="M-17,9 H17 Q0,24 -17,9Z" fill="#fff" stroke="none"/></g><text x="214" y="52.5" font-family="Liberation Sans" font-weight="bold" font-size="25" fill="#8EA14B" stroke="#8EA14B" stroke-width="1.2" textLength="500" lengthAdjust="spacing">I AM HAPPY AND THIS IS HOW I FEEL</text></svg>
<div class="t" style="left:12.56px;top:169.30px;font-size:15px;color:#444;font-weight:normal;transform:scaleX(0.9429);transform-origin:0 0;">1</div>
<div class="a" style="left:11px;top:190.5px;width:1.3px;height:1.3px;background:#666;"></div>
<div class="a" style="left:11px;top:193px;width:1.3px;height:1.3px;background:#666;"></div>
<svg class="a" style="left:12px;top:188px;" width="9.5" height="8.5" viewBox="0 0 9.5 8.5"><path d="M4.75,0 L5.95,3.1 L9.4,3.2 L6.7,5.3 L7.6,8.5 L4.75,6.7 L1.9,8.5 L2.8,5.3 L0.1,3.2 L3.55,3.1Z" fill="#555"/></svg>
<div class="t" style="left:12.56px;top:281.30px;font-size:15px;color:#444;font-weight:normal;transform:scaleX(0.9429);transform-origin:0 0;">2</div>
<div class="a" style="left:11px;top:302.5px;width:1.3px;height:1.3px;background:#666;"></div>
<div class="a" style="left:11px;top:305px;width:1.3px;height:1.3px;background:#666;"></div>
<svg class="a" style="left:12px;top:300px;" width="9.5" height="8.5" viewBox="0 0 9.5 8.5"><path d="M4.75,0 L5.95,3.1 L9.4,3.2 L6.7,5.3 L7.6,8.5 L4.75,6.7 L1.9,8.5 L2.8,5.3 L0.1,3.2 L3.55,3.1Z" fill="#555"/></svg>
<div class="t" style="left:12.56px;top:393.30px;font-size:15px;color:#D24726;font-weight:normal;transform:scaleX(0.9429);transform-origin:0 0;">3</div>
<div class="a" style="left:11px;top:414.5px;width:1.3px;height:1.3px;background:#666;"></div>
<div class="a" style="left:11px;top:417px;width:1.3px;height:1.3px;background:#666;"></div>
<svg class="a" style="left:12px;top:412px;" width="9.5" height="8.5" viewBox="0 0 9.5 8.5"><path d="M4.75,0 L5.95,3.1 L9.4,3.2 L6.7,5.3 L7.6,8.5 L4.75,6.7 L1.9,8.5 L2.8,5.3 L0.1,3.2 L3.55,3.1Z" fill="#555"/></svg>
<div class="t" style="left:13.50px;top:505.30px;font-size:15px;color:#444;font-weight:normal;transform:scaleX(0.8250);transform-origin:0 0;">4</div>
<div class="a" style="left:11px;top:526.5px;width:1.3px;height:1.3px;background:#666;"></div>
<div class="a" style="left:11px;top:529px;width:1.3px;height:1.3px;background:#666;"></div>
<svg class="a" style="left:12px;top:524px;" width="9.5" height="8.5" viewBox="0 0 9.5 8.5"><path d="M4.75,0 L5.95,3.1 L9.4,3.2 L6.7,5.3 L7.6,8.5 L4.75,6.7 L1.9,8.5 L2.8,5.3 L0.1,3.2 L3.55,3.1Z" fill="#555"/></svg>
<div class="t" style="left:12.56px;top:617.30px;font-size:15px;color:#444;font-weight:normal;transform:scaleX(0.9429);transform-origin:0 0;">5</div>
<div class="a" style="left:11px;top:638.5px;width:1.3px;height:1.3px;background:#666;"></div>
<div class="a" style="left:11px;top:641px;width:1.3px;height:1.3px;background:#666;"></div>
<svg class="a" style="left:12px;top:636px;" width="9.5" height="8.5" viewBox="0 0 9.5 8.5"><path d="M4.75,0 L5.95,3.1 L9.4,3.2 L6.7,5.3 L7.6,8.5 L4.75,6.7 L1.9,8.5 L2.8,5.3 L0.1,3.2 L3.55,3.1Z" fill="#555"/></svg>
</div></div>
</body></html>
